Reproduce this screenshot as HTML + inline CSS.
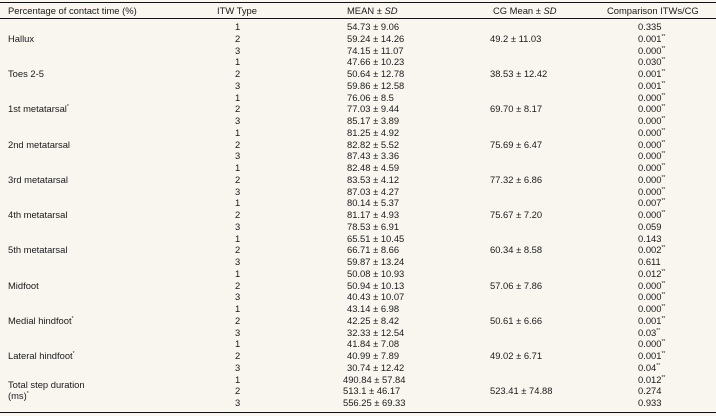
<!DOCTYPE html>
<html><head><meta charset="utf-8"><style>
body{margin:0;width:716px;height:416px;background:#f9f6f0;font-family:"Liberation Sans",sans-serif;font-size:9.4px;color:#1a1a1a;position:relative;overflow:hidden}
.ln{position:absolute;left:0;width:716px;height:1px;background:#111}
.h{position:absolute;top:6px;line-height:10px}
.r{position:absolute;left:0;width:716px;height:10px;line-height:10px}
.r span{position:absolute;top:0;white-space:nowrap}
.t{left:235px}.m{left:347px}.m3{left:343px}.c{left:490px}.p{left:638px}
.l{left:8px}
sup{font-size:5px;vertical-align:4px;line-height:0}
</style></head><body>
<div class="ln" style="top:2px"></div>
<div class="ln" style="top:18px;height:0.8px"></div>
<div class="ln" style="top:412px"></div>
<div class="h" style="left:8px">Percentage of contact time (%)</div>
<div class="h" style="left:217px">ITW Type</div>
<div class="h" style="left:347px">MEAN ± <i>SD</i></div>
<div class="h" style="left:493px">CG Mean ± <i>SD</i></div>
<div class="h" style="left:607px">Comparison ITWs/CG</div>
<div class="r" style="top:22px"><span class="t">1</span><span class="m">54.73 ± 9.06</span><span class="p">0.335</span></div>
<div class="r" style="top:33.75px"><span class="l">Hallux</span><span class="t">2</span><span class="m">59.24 ± 14.26</span><span class="c">49.2 ± 11.03</span><span class="p">0.001<sup>**</sup></span></div>
<div class="r" style="top:45.5px"><span class="t">3</span><span class="m">74.15 ± 11.07</span><span class="p">0.000<sup>**</sup></span></div>
<div class="r" style="top:57.25px"><span class="t">1</span><span class="m">47.66 ± 10.23</span><span class="p">0.030<sup>**</sup></span></div>
<div class="r" style="top:69px"><span class="l">Toes 2-5</span><span class="t">2</span><span class="m">50.64 ± 12.78</span><span class="c">38.53 ± 12.42</span><span class="p">0.001<sup>**</sup></span></div>
<div class="r" style="top:80.75px"><span class="t">3</span><span class="m">59.86 ± 12.58</span><span class="p">0.001<sup>**</sup></span></div>
<div class="r" style="top:92.5px"><span class="t">1</span><span class="m">76.06 ± 8.5</span><span class="p">0.000<sup>**</sup></span></div>
<div class="r" style="top:104.25px"><span class="l">1st metatarsal<sup>*</sup></span><span class="t">2</span><span class="m">77.03 ± 9.44</span><span class="c">69.70 ± 8.17</span><span class="p">0.000<sup>**</sup></span></div>
<div class="r" style="top:116px"><span class="t">3</span><span class="m">85.17 ± 3.89</span><span class="p">0.000<sup>**</sup></span></div>
<div class="r" style="top:127.75px"><span class="t">1</span><span class="m">81.25 ± 4.92</span><span class="p">0.000<sup>**</sup></span></div>
<div class="r" style="top:139.5px"><span class="l">2nd metatarsal</span><span class="t">2</span><span class="m">82.82 ± 5.52</span><span class="c">75.69 ± 6.47</span><span class="p">0.000<sup>**</sup></span></div>
<div class="r" style="top:151.25px"><span class="t">3</span><span class="m">87.43 ± 3.36</span><span class="p">0.000<sup>**</sup></span></div>
<div class="r" style="top:163px"><span class="t">1</span><span class="m">82.48 ± 4.59</span><span class="p">0.000<sup>**</sup></span></div>
<div class="r" style="top:174.75px"><span class="l">3rd metatarsal</span><span class="t">2</span><span class="m">83.53 ± 4.12</span><span class="c">77.32 ± 6.86</span><span class="p">0.000<sup>**</sup></span></div>
<div class="r" style="top:186.5px"><span class="t">3</span><span class="m">87.03 ± 4.27</span><span class="p">0.000<sup>**</sup></span></div>
<div class="r" style="top:198.25px"><span class="t">1</span><span class="m">80.14 ± 5.37</span><span class="p">0.007<sup>**</sup></span></div>
<div class="r" style="top:210px"><span class="l">4th metatarsal</span><span class="t">2</span><span class="m">81.17 ± 4.93</span><span class="c">75.67 ± 7.20</span><span class="p">0.000<sup>**</sup></span></div>
<div class="r" style="top:221.75px"><span class="t">3</span><span class="m">78.53 ± 6.91</span><span class="p">0.059</span></div>
<div class="r" style="top:233.5px"><span class="t">1</span><span class="m">65.51 ± 10.45</span><span class="p">0.143</span></div>
<div class="r" style="top:245.25px"><span class="l">5th metatarsal</span><span class="t">2</span><span class="m">66.71 ± 8.66</span><span class="c">60.34 ± 8.58</span><span class="p">0.002<sup>**</sup></span></div>
<div class="r" style="top:257px"><span class="t">3</span><span class="m">59.87 ± 13.24</span><span class="p">0.611</span></div>
<div class="r" style="top:268.75px"><span class="t">1</span><span class="m">50.08 ± 10.93</span><span class="p">0.012<sup>**</sup></span></div>
<div class="r" style="top:280.5px"><span class="l">Midfoot</span><span class="t">2</span><span class="m">50.94 ± 10.13</span><span class="c">57.06 ± 7.86</span><span class="p">0.000<sup>**</sup></span></div>
<div class="r" style="top:292.25px"><span class="t">3</span><span class="m">40.43 ± 10.07</span><span class="p">0.000<sup>**</sup></span></div>
<div class="r" style="top:304px"><span class="t">1</span><span class="m">43.14 ± 6.98</span><span class="p">0.000<sup>**</sup></span></div>
<div class="r" style="top:315.75px"><span class="l">Medial hindfoot<sup>*</sup></span><span class="t">2</span><span class="m">42.25 ± 8.42</span><span class="c">50.61 ± 6.66</span><span class="p">0.001<sup>**</sup></span></div>
<div class="r" style="top:327.5px"><span class="t">3</span><span class="m">32.33 ± 12.54</span><span class="p">0.03<sup>**</sup></span></div>
<div class="r" style="top:339.25px"><span class="t">1</span><span class="m">41.84 ± 7.08</span><span class="p">0.000<sup>**</sup></span></div>
<div class="r" style="top:351px"><span class="l">Lateral hindfoot<sup>*</sup></span><span class="t">2</span><span class="m">40.99 ± 7.89</span><span class="c">49.02 ± 6.71</span><span class="p">0.001<sup>**</sup></span></div>
<div class="r" style="top:362.75px"><span class="t">3</span><span class="m">30.74 ± 12.42</span><span class="p">0.04<sup>**</sup></span></div>
<div class="r" style="top:374.5px"><span class="t">1</span><span class="m3">490.84 ± 57.84</span><span class="p">0.012<sup>**</sup></span></div>
<div class="r" style="top:386.25px"><span class="l" style="top:-6px">Total step duration</span><span class="l" style="top:5px">(ms)<sup>*</sup></span><span class="t">2</span><span class="m3">513.1 ± 46.17</span><span class="c">523.41 ± 74.88</span><span class="p">0.274</span></div>
<div class="r" style="top:398px"><span class="t">3</span><span class="m3">556.25 ± 69.33</span><span class="p">0.933</span></div>
</body></html>
